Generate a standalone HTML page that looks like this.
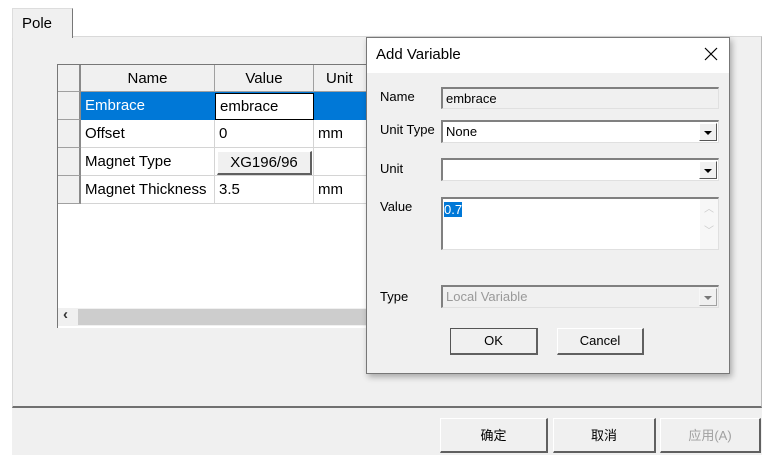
<!DOCTYPE html>
<html><head><style>
*{box-sizing:border-box;margin:0;padding:0}
body{width:770px;height:460px;background:#fff;position:relative;overflow:hidden;font-family:"Liberation Sans","Noto Sans CJK SC",sans-serif;font-size:14px;color:#000}
.a{position:absolute}
.cell{position:absolute;border-right:1px solid #d4d4d4;border-bottom:1px solid #d4d4d4;padding-left:4px;line-height:27px;white-space:nowrap;overflow:hidden;font-size:15px}
.hdr{background:#f0f0f0;border-right:1px solid #a0a0a0;border-bottom:1px solid #a0a0a0;text-align:center;padding:0}
.rh{background:#f0f0f0;border-right:2px solid #8a8a8a;border-bottom:1px solid #a0a0a0}
.lbl{position:absolute;left:380px;font-size:13px}
.fld{position:absolute;left:441px;width:278px;border-top:2px solid #808080;border-left:2px solid #808080;border-right:1px solid #e0e0e0;border-bottom:1px solid #e0e0e0;background:#fff;font-size:13px;padding-left:3px}
.dd{position:absolute;right:1px;top:1px;width:18px;bottom:1px;background:#f0f0f0;border-right:1px solid #555;border-bottom:1px solid #555;border-top:1px solid #fff;border-left:1px solid #fff}
.dd:after{content:"";position:absolute;left:4px;top:7px;border-left:4px solid transparent;border-right:4px solid transparent;border-top:4px solid #000}
.btn{position:absolute;background:#f0f0f0;border-top:1px solid #fff;border-left:1px solid #fff;border-right:2px solid #606060;border-bottom:2px solid #606060;text-align:center;font-size:13px}
</style></head><body>
<div class="a" style="left:12px;top:36px;width:750px;height:372px;background:#f0f0f0;border:1px solid #d9d9d9;border-bottom:2px solid #707070;border-right:1px solid #bbb"></div>
<div class="a" style="left:12px;top:8px;width:61px;height:30px;background:#f0f0f0;border-top:1px solid #ddd;border-right:1px solid #777;border-left:1px solid #ddd;padding:6px 0 0 9px;font-size:15px">Pole</div>
<div class="a" style="left:12px;top:408px;width:750px;height:47px;background:#f0f0f0"></div>
<div class="btn" style="left:440px;top:418px;width:108px;height:35px;line-height:33px">确定</div>
<div class="btn" style="left:553px;top:418px;width:103px;height:35px;line-height:33px">取消</div>
<div class="btn" style="left:660px;top:418px;width:101px;height:35px;line-height:33px;color:#a0a0a0">应用(A)</div>
<div class="a" style="left:57px;top:64px;width:320px;height:264px;background:#fff;border-left:1px solid #777;border-top:1px solid #777"></div>
<div class="cell hdr" style="left:58px;top:65px;width:23px;height:27px;border-right:2px solid #8a8a8a"></div>
<div class="cell hdr" style="left:81px;top:65px;width:134px;height:27px">Name</div>
<div class="cell hdr" style="left:215px;top:65px;width:99px;height:27px">Value</div>
<div class="cell hdr" style="left:314px;top:65px;width:60px;height:27px;text-align:left;padding-left:12px">Unit</div>
<div class="cell rh" style="left:58px;top:92px;width:23px;height:28px"></div>
<div class="cell" style="left:81px;top:92px;width:290px;height:28px;background:#0078d7;color:#fff;border:none">Embrace</div>
<div class="a" style="left:215px;top:93px;width:99px;height:27px;background:#fff;border:1px solid #000;padding-left:4px;line-height:25px;font-size:15px">embrace</div>
<div class="cell rh" style="left:58px;top:120px;width:23px;height:28px"></div>
<div class="cell" style="left:81px;top:120px;width:134px;height:28px">Offset</div>
<div class="cell" style="left:215px;top:120px;width:99px;height:28px">0</div>
<div class="cell" style="left:314px;top:120px;width:60px;height:28px">mm</div>
<div class="cell rh" style="left:58px;top:148px;width:23px;height:28px"></div>
<div class="cell" style="left:81px;top:148px;width:134px;height:28px">Magnet Type</div>
<div class="cell" style="left:215px;top:148px;width:99px;height:28px"></div>
<div class="btn" style="left:217px;top:151px;width:95px;height:24px;line-height:21px;font-size:15px">XG196/96</div>
<div class="cell" style="left:314px;top:148px;width:60px;height:28px"></div>
<div class="cell rh" style="left:58px;top:176px;width:23px;height:28px"></div>
<div class="cell" style="left:81px;top:176px;width:134px;height:28px">Magnet Thickness</div>
<div class="cell" style="left:215px;top:176px;width:99px;height:28px">3.5</div>
<div class="cell" style="left:314px;top:176px;width:60px;height:28px">mm</div>
<div class="a" style="left:58px;top:308px;width:318px;height:18px;background:#f0f0f0"></div>
<div class="a" style="left:78px;top:309px;width:298px;height:16px;background:#cdcdcd"></div>
<div class="a" style="left:63px;top:306px;font-size:15px;font-weight:bold;color:#333">&lsaquo;</div>
<div class="a" style="left:366px;top:37px;width:364px;height:337px;background:#f0f0f0;border:1px solid #777;box-shadow:2px 3px 6px rgba(0,0,0,.3)"></div>
<div class="a" style="left:367px;top:38px;width:362px;height:35px;background:#fff"></div>
<div class="a" style="left:376px;top:46px;font-size:15px">Add Variable</div>
<svg class="a" style="left:704px;top:47px" width="14" height="14"><path d="M1 1L13 13M13 1L1 13" stroke="#000" stroke-width="1.2"/></svg>
<div class="lbl" style="top:89px">Name</div>
<div class="fld" style="top:87px;height:22px;background:#f0f0f0;line-height:19px">embrace</div>
<div class="lbl" style="top:122px">Unit Type</div>
<div class="fld" style="top:120px;height:23px;line-height:20px">None<div class="dd"></div></div>
<div class="lbl" style="top:161px">Unit</div>
<div class="fld" style="top:158px;height:23px"><div class="dd"></div></div>
<div class="lbl" style="top:199px">Value</div>
<div class="fld" style="top:197px;height:53px;padding:3px 0 0 1px"><span style="background:#0078d7;color:#fff">0.7</span>
<div class="a" style="right:0;top:0;width:18px;bottom:0;background:#f7f7f7;color:#ccc;font-size:10px;text-align:center;line-height:22px">︿<br>﹀</div></div>
<div class="lbl" style="top:289px">Type</div>
<div class="fld" style="top:285px;height:23px;background:#f0f0f0;color:#999;line-height:20px">Local Variable<div class="dd" style="opacity:.5"></div></div>
<div class="btn" style="left:450px;top:328px;width:88px;height:27px;line-height:24px;border-top:1px solid #555;border-left:1px solid #555">OK</div>
<div class="btn" style="left:557px;top:328px;width:87px;height:27px;line-height:24px">Cancel</div>
</body></html>
